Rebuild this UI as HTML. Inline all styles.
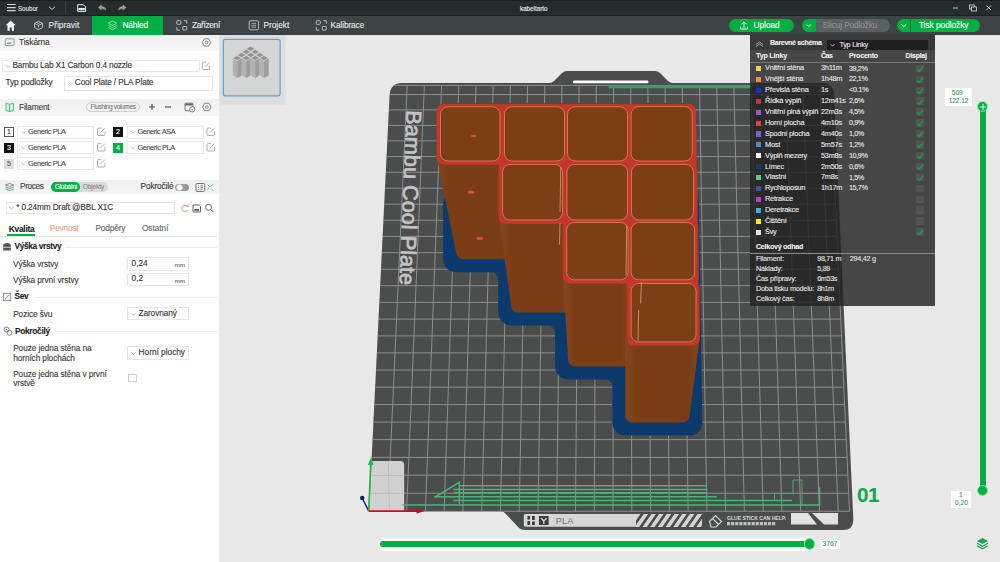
<!DOCTYPE html>
<html><head><meta charset="utf-8">
<style>
*{margin:0;padding:0;box-sizing:border-box}
html,body{width:1000px;height:562px;overflow:hidden;background:#e8e8e8;font-family:"Liberation Sans",sans-serif;position:relative}
.a{position:absolute}
#title{left:0;top:0;width:1000px;height:16px;background:#262c2d;border-top:1px solid #1a1e1f;border-bottom:1px solid #1b2021}
#tabs{left:0;top:16px;width:1000px;height:19px;background:#3d4445;border-bottom:1px solid #353b3c}
#left{left:0;top:35px;width:219px;height:527px;background:#fff}
svg{position:absolute;left:0;top:0}
.t{position:absolute;white-space:nowrap;line-height:1;-webkit-text-stroke:0.12px currentColor}
</style></head><body>
<svg width="1000" height="562" viewBox="0 0 1000 562">
 <defs><clipPath id="pc"><path d="M389.6 95 Q390.4 83 402 83 L822 83 Q833.5 83 834 95 L853.3 519 L853 511.3 L369 511.3 Z"/></clipPath></defs>
 <path d="M389.6 95 Q390.4 83 402 83 L549 83 Q552 83 554 81 L562 73 Q564 71 567 71 L655 71 Q658 71 660 73 L668 81 Q670 83 673 83 L822 83 Q833.5 83 834 95 L853.3 519 Q853.8 530 843 530 L525 530 Q521 530 519 528 L505 513 Q503 511 500 511 L369 511.3 Z" fill="#4b4c4c"/>
 <path clip-path="url(#pc)" d="M387.8 511.3L407.2 85.4M406.6 511.3L424.4 85.4M425.4 511.3L441.6 85.4M444.1 511.3L458.8 85.4M462.9 511.3L476.0 85.4M481.7 511.3L493.2 85.4M500.4 511.3L510.4 85.4M519.2 511.3L527.6 85.4M538.0 511.3L544.8 85.4M556.7 511.3L561.9 85.4M575.5 511.3L579.1 85.4M594.3 511.3L596.3 85.4M613.0 511.3L613.5 85.4M631.8 511.3L630.7 85.4M650.6 511.3L647.9 85.4M669.3 511.3L665.1 85.4M688.1 511.3L682.3 85.4M706.9 511.3L699.5 85.4M725.6 511.3L716.7 85.4M744.4 511.3L733.8 85.4M763.2 511.3L751.0 85.4M781.9 511.3L768.2 85.4M800.7 511.3L785.4 85.4M819.5 511.3L802.6 85.4M838.2 511.3L819.8 85.4M370.0 493.2L848.7 493.2M370.8 475.2L847.9 475.2M371.7 457.4L847.0 457.4M372.6 439.6L846.2 439.6M373.5 422.1L845.4 422.1M374.3 404.6L844.6 404.6M375.2 387.2L843.8 387.2M376.0 370.0L843.1 370.0M376.9 352.9L842.3 352.9M377.7 335.9L841.5 335.9M378.5 319.1L840.7 319.1M379.4 302.3L840.0 302.3M380.2 285.7L839.2 285.7M381.0 269.2L838.5 269.2M381.8 252.7L837.7 252.7M382.6 236.4L837.0 236.4M383.4 220.3L836.2 220.3M384.2 204.2L835.5 204.2M385.0 188.2L834.8 188.2M385.8 172.3L834.1 172.3M386.5 156.6L833.3 156.6M387.3 140.9L832.6 140.9M388.1 125.4L831.9 125.4M388.8 109.9L831.2 109.9M389.6 94.6L830.5 94.6M390.1 85.4L830.1 85.4M849.5 511.3L830.1 85.4" stroke="#8d8e8e" stroke-width="1" fill="none"/>
 <rect x="573" y="80.5" width="75.5" height="2.7" rx="1.3" fill="#fff"/>


 <!-- bottom label -->
 <path d="M525.5 514L636 514L636 526.8L525.5 526.8Q523.8 526.8 523.8 525L523.8 515.8Q523.8 514 525.5 514Z" fill="#d6d6d6"/>
 <defs><clipPath id="sc"><rect x="636" y="514" width="66" height="13"/></clipPath></defs>
 <path clip-path="url(#sc)" d="M627.0 527L631.5 527L640.5 514L636.0 514ZM634.7 527L639.2 527L648.2 514L643.7 514ZM642.4 527L646.9 527L655.9 514L651.4 514ZM650.1 527L654.6 527L663.6 514L659.1 514ZM657.8 527L662.3 527L671.3 514L666.8 514ZM665.5 527L670.0 527L679.0 514L674.5 514ZM673.2 527L677.7 527L686.7 514L682.2 514ZM680.9 527L685.4 527L694.4 514L689.9 514ZM688.6 527L693.1 527L702.1 514L697.6 514ZM696.3 527L700.8 527L709.8 514L705.3 514ZM704.0 527L708.5 527L717.5 514L713.0 514Z" fill="#d4d4d4"/>
 <path d="M527.4 516h2.6v3.6h-2.6zM527.4 521h2.6v4h-2.6zM532 516h2.8v4h-2.8zM532 521.5h2.8v3.5h-2.8z" fill="#3a3a3a"/>
 <rect x="539" y="516" width="9.6" height="9" fill="#3a3a3a"/>
 <path d="M541 518L543.8 521L546.5 518.2M543.8 521L543.8 524" stroke="#d6d6d6" stroke-width="1.4" fill="none"/>
 <text x="555.8" y="524" font-family="Liberation Sans" font-size="9.2" fill="#707070" textLength="17.6" lengthAdjust="spacingAndGlyphs">PLA</text>
 <path d="M709.5 521.5L715.5 515.5L721.5 521.5L716 527L711 527Z" fill="none" stroke="#d8d8d8" stroke-width="1.1"/>
 <path d="M712.5 518.5L718.5 524.5" stroke="#d8d8d8" stroke-width="1.1"/>
 <text x="727" y="520" font-family="Liberation Sans" font-weight="700" font-size="4.8" fill="#dcdcdc" textLength="59" lengthAdjust="spacingAndGlyphs">GLUE STICK CAN HELP.</text>
 <path d="M727 523.6H776" stroke="#cfcfcf" stroke-width="3.2" stroke-dasharray="3.2 0.9" opacity="0.85"/>
 <path d="M791 513L808 513L817 524.4L791 524.4Z" fill="#e2e2e2"/>
 <path d="M812 513L838 513L838 524.4L824 524.4Z" fill="#e2e2e2"/>
 <path d="M369 511.3L849.5 511.3" stroke="#8d8e8e" stroke-width="1"/>
 <!-- excluded area -->
 <path d="M371.5 461 L400.2 461 Q404.2 461 404.2 465 L404.2 511 L369.2 511 Z" fill="#d1d1d1"/>
 <path d="M372.2 475.6L404.2 475.6M371.2 493.4L404.2 493.4M388.3 461L389.4 511" stroke="#bdbdbd" stroke-width="1"/>
 <!-- Bambu Cool Plate -->
 <text transform="translate(406.5,110) rotate(92.3)" font-family="Liberation Sans" font-size="21.5" fill="#c4c4c4" stroke="#c4c4c4" stroke-width="0.7" textLength="175" lengthAdjust="spacingAndGlyphs">Bambu Cool Plate</text>
 <!-- green extrusions -->
 <g stroke="#4db374" stroke-width="1.5" fill="none" stroke-linecap="round">
  <path d="M608.5 86.8L750 86.8" stroke-width="3" stroke="#3f9c68" stroke-linecap="butt"/>
  <path d="M435.1 497L459.3 482.3L459.3 504.2"/>
  <path d="M459.3 485.8L706.8 485.8M454 489.6L706.8 489.6M454.5 492.8L706.8 492.8M435.1 496.8L716 496.8M454 500.6L791.5 500.6M403 505L819.5 505L819.5 488"/>
 </g>
 <g stroke="#4aa870" stroke-width="1" fill="none">
  <path d="M774.5 500.5L774.5 493.5L793 493.5L793 480L802 480L802 505M802 493.5L819.5 493.5"/>
 </g>
 <!-- axes -->
 <path d="M368.7 511L362.2 498" stroke="#0b1a6b" stroke-width="1.4"/>
 <circle cx="362.2" cy="498" r="2.2" fill="#0b1a6b"/>
 <path d="M368.7 511L370.8 463" stroke="#1db83a" stroke-width="1.6"/>
 <path d="M367.9 465L371 457.3L373.6 465Z" fill="#1db83a"/>
 <path d="M368.7 511.2L418 511.2" stroke="#c0141a" stroke-width="1.8"/>
 <path d="M416.5 508.6L424.4 511.2L416.5 513.6Z" fill="#c0141a"/>
 <!-- brim -->
 <path d="M456.2 204.5L685.9 204.5L689.3 422.6L625.3 422.6L625.3 366.4L568.1 366.4L568.1 312.4L511.2 312.4L511.2 259.2L456.2 259.2Z" fill="#0c3a6c" stroke="#0c3a6c" stroke-width="26" stroke-linejoin="round"/><path d="M612.3 379.4L612.3 386.4A7 7 0 0 0 605.3 379.4ZM555.1 325.4L555.1 332.4A7 7 0 0 0 548.1 325.4ZM498.2 272.2L498.2 279.2A7 7 0 0 0 491.2 272.2Z" fill="#0c3a6c"/>
 <!-- walls -->
 <defs><linearGradient id="wg" x1="0" x2="1" y1="0" y2="0"><stop offset="0" stop-color="#86461b"/><stop offset="0.16" stop-color="#7a3d15"/><stop offset="0.84" stop-color="#7a3d15"/><stop offset="1" stop-color="#84441a"/></linearGradient></defs><path d="M436.7 111.3L437.0 109.2L437.8 107.3L439.0 105.6L440.7 104.4L442.6 103.6L444.7 103.3L495.8 103.3L497.9 103.6L499.8 104.4L501.5 105.6L502.7 107.3L503.5 109.2L503.8 111.3L515.7 210.6L515.7 252.2L515.5 254.0L514.8 255.7L513.6 257.1L512.2 258.2L510.5 258.9L508.7 259.2L463.2 259.2L461.4 258.9L459.7 258.2L458.2 257.1L457.1 255.7L456.4 254.0L437.0 158.9L436.7 156.8Z" fill="url(#wg)"/><path d="M500.7 111.3L501.0 109.2L501.8 107.3L503.0 105.6L504.7 104.4L506.6 103.6L508.7 103.3L560.3 103.3L562.4 103.6L564.3 104.4L566.0 105.6L567.2 107.3L568.0 109.2L568.3 111.3L572.9 210.6L572.9 252.2L572.7 254.0L572.0 255.7L570.8 257.1L569.4 258.2L567.7 258.9L565.9 259.2L519.9 259.2L518.1 258.9L516.4 258.2L515.0 257.1L513.9 255.7L513.2 254.0L512.9 252.2L500.7 156.8Z" fill="url(#wg)"/><path d="M563.7 111.3L564.0 109.2L564.8 107.3L566.0 105.6L567.7 104.4L569.6 103.6L571.7 103.3L623.3 103.3L625.4 103.6L627.3 104.4L629.0 105.6L630.2 107.3L631.0 109.2L631.3 111.3L631.3 156.8L628.8 252.2L628.5 254.0L627.8 255.7L626.7 257.1L625.3 258.2L623.6 258.9L621.8 259.2L575.8 259.2L574.0 258.9L572.3 258.2L570.9 257.1L569.8 255.7L569.0 254.0L568.8 252.2L563.7 156.8Z" fill="url(#wg)"/><path d="M625.2 210.5L627.3 111.1L627.6 109.0L628.4 107.1L629.6 105.4L631.3 104.2L633.2 103.4L635.3 103.1L688.0 103.1L690.1 103.4L692.0 104.2L693.7 105.4L694.9 107.1L695.7 109.0L696.0 111.1L696.0 156.8L686.1 252.2L685.9 254.0L685.2 255.7L684.1 257.1L682.6 258.2L681.0 258.9L679.1 259.2L632.2 259.2L630.4 258.9L628.7 258.2L627.3 257.1L626.2 255.7L625.5 254.0L625.2 252.2Z" fill="url(#wg)"/><path d="M498.7 168.9L499.0 166.8L499.8 164.9L501.0 163.2L502.7 162.0L504.6 161.2L506.7 160.9L558.3 160.9L560.4 161.2L562.3 162.0L564.0 163.2L565.2 164.9L566.0 166.8L566.3 168.9L571.1 262.6L571.1 305.4L570.9 307.2L570.2 308.9L569.1 310.4L567.6 311.5L565.9 312.2L564.1 312.4L518.2 312.4L516.4 312.2L514.7 311.5L513.2 310.4L512.1 308.9L511.4 307.2L499.0 217.9L498.7 215.8Z" fill="url(#wg)"/><path d="M563.2 168.9L563.5 166.8L564.3 164.9L565.5 163.2L567.2 162.0L569.1 161.2L571.2 160.9L623.3 160.9L625.4 161.2L627.3 162.0L629.0 163.2L630.2 164.9L631.0 166.8L631.3 168.9L631.3 215.8L628.8 305.4L628.5 307.2L627.8 308.9L626.7 310.4L625.3 311.5L623.6 312.2L621.8 312.4L575.4 312.4L573.6 312.2L571.9 311.5L570.4 310.4L569.3 308.9L568.6 307.2L568.4 305.4L563.2 215.8Z" fill="url(#wg)"/><path d="M625.6 262.6L627.7 168.9L628.0 166.8L628.8 164.9L630.0 163.2L631.7 162.0L633.6 161.2L635.7 160.9L689.3 160.9L691.4 161.2L693.3 162.0L695.0 163.2L696.2 164.9L697.0 166.8L697.3 168.9L697.3 215.8L687.3 305.4L687.1 307.2L686.4 308.9L685.2 310.4L683.8 311.5L682.1 312.2L680.3 312.4L632.6 312.4L630.8 312.2L629.1 311.5L627.6 310.4L626.5 308.9L625.8 307.2L625.6 305.4Z" fill="url(#wg)"/><path d="M562.9 227.0L563.2 224.9L564.0 223.0L565.2 221.3L566.9 220.1L568.8 219.3L570.9 219.0L623.8 219.0L625.9 219.3L627.8 220.1L629.5 221.3L630.7 223.0L631.5 224.9L631.8 227.0L631.8 275.6L629.2 359.4L629.0 361.2L628.3 362.9L627.2 364.4L625.7 365.5L624.0 366.2L622.2 366.4L575.1 366.4L573.3 366.2L571.6 365.5L570.2 364.4L569.0 362.9L568.3 361.2L568.1 359.4L562.9 275.6Z" fill="url(#wg)"/><path d="M625.3 315.1L627.4 227.0L627.7 224.9L628.5 223.0L629.7 221.3L631.4 220.1L633.3 219.3L635.4 219.0L690.5 219.0L692.6 219.3L694.5 220.1L696.2 221.3L697.4 223.0L698.2 224.9L698.5 227.0L698.5 275.6L688.4 359.4L688.1 361.2L687.4 362.9L686.3 364.4L684.9 365.5L683.2 366.2L681.4 366.4L632.3 366.4L630.5 366.2L628.8 365.5L627.4 364.4L626.2 362.9L625.5 361.2L625.3 359.4Z" fill="url(#wg)"/><path d="M625.3 370.2L627.4 288.0L627.7 285.9L628.5 284.0L629.7 282.3L631.4 281.1L633.3 280.3L635.4 280.0L691.8 280.0L693.9 280.3L695.8 281.1L697.5 282.3L698.7 284.0L699.5 285.9L699.8 288.0L699.8 337.8L699.5 339.9L689.5 415.6L689.3 417.4L688.6 419.1L687.5 420.5L686.0 421.6L684.3 422.3L682.5 422.6L632.3 422.6L630.5 422.3L628.8 421.6L627.4 420.5L626.2 419.1L625.5 417.4L625.3 415.6Z" fill="url(#wg)"/>
 <!-- top outline -->
 <path d="M444.2 104.2 L688.2 104.2 Q695.7 104.2 695.9 111.7 L699.5 338.3 Q699.5 345.8 692 345.8 L634.9 345.8 Q627.4 345.8 627.4 338.3 L627.4 283.6 L570.4 283.6 Q562.9 283.6 562.9 276.1 L562.9 223.8 L506.2 223.8 Q498.7 223.8 498.7 216.3 L498.7 164.8 L444.2 164.8 Q436.7 164.8 436.7 157.3 L436.7 111.7 Q436.7 104.2 444.2 104.2 Z" fill="#c3372a"/>
 <g fill="#7b3e15" stroke="#e7835a" stroke-width="0.8"><rect x="440.5" y="106.8" width="59.5" height="54.2" rx="7.5"/><rect x="504.5" y="106.8" width="60.0" height="54.2" rx="7.5"/><rect x="567.5" y="106.8" width="60.0" height="54.2" rx="7.5"/><rect x="631.1" y="106.6" width="61.1" height="54.4" rx="7.5"/><rect x="502.5" y="164.4" width="60.0" height="55.6" rx="7.5"/><rect x="567" y="164.4" width="60.5" height="55.6" rx="7.5"/><rect x="631.5" y="164.4" width="62.0" height="55.6" rx="7.5"/><rect x="566.7" y="222.5" width="61.3" height="57.3" rx="7.5"/><rect x="631.2" y="222.5" width="63.5" height="57.3" rx="7.5"/><rect x="631.2" y="283.5" width="64.8" height="58.5" rx="7.5"/></g>


 <g stroke="#efc8a8" stroke-width="0.7" opacity="0.85"><path d="M560.8 167L560 212M560 223L559.5 244.7M626.7 226L626 275.4M641.4 282L640.6 303.4M638.7 310L638 340.8"/></g>
 <g fill="#d8503a"><ellipse cx="473.6" cy="136" rx="2.6" ry="1.2"/><ellipse cx="471" cy="192.2" rx="3.2" ry="1.6"/><ellipse cx="479.7" cy="238.4" rx="3.2" ry="1.6"/></g>
</svg>
<div class="a" style="left:750px;top:35px;width:185px;height:271px;background:rgba(34,34,34,0.82)"></div>
<div class="a" style="left:750px;top:35px;width:185px;height:15px;background:rgba(20,20,20,0.25)"></div>
<div class="t" style="left:770px;top:40.22px;font-size:7.1px;color:#f0f0f0;font-weight:700;letter-spacing:-0.346px;">Barevné schéma</div>
<div class="a" style="left:827px;top:40px;width:101px;height:9.5px;background:#1e1e1e"></div>
<div class="t" style="left:839.4px;top:40.91px;font-size:7.3px;color:#e6e6e6;font-weight:400;letter-spacing:-0.249px;">Typ Linky</div>
<div class="t" style="left:756px;top:52.82px;font-size:7.1px;color:#eeeeee;font-weight:700;letter-spacing:-0.179px;">Typ Linky</div>
<div class="t" style="left:821px;top:52.82px;font-size:7.1px;color:#eeeeee;font-weight:700;letter-spacing:-0.544px;">Čas</div>
<div class="t" style="left:849px;top:52.82px;font-size:7.1px;color:#eeeeee;font-weight:700;letter-spacing:-0.222px;">Procento</div>
<div class="t" style="left:905.6px;top:52.82px;font-size:7.1px;color:#eeeeee;font-weight:700;letter-spacing:-0.328px;">Displaj</div>
<div class="a" style="left:750px;top:62px;width:185px;height:0.8px;background:#777"></div>
<div class="a" style="left:756px;top:66.0px;width:5.2px;height:5.2px;background:#f2d544"></div>
<div class="t" style="left:765px;top:64.46px;font-size:7.4px;color:#e8e8e8;font-weight:400;letter-spacing:-0.194px;">Vnitřní stěna</div>
<div class="t" style="left:821px;top:64.46px;font-size:7.4px;color:#e8e8e8;font-weight:400;letter-spacing:-0.269px;">3h11m</div>
<div class="t" style="left:849px;top:64.57px;font-size:7.2px;color:#e8e8e8;font-weight:400;letter-spacing:-0.397px;">39,2%</div>
<div class="a" style="left:916px;top:64.69999999999999px;width:8px;height:7.6px;background:rgba(95,95,95,0.55)"></div>
<svg class="a" style="left:916px;top:64.8px" width="8" height="8" viewBox="0 0 8 8"><path d="M1.3 4.3L3.3 6.3L7.2 1.8" stroke="#1f9350" stroke-width="1.7" fill="none"/></svg>
<div class="a" style="left:756px;top:76.9px;width:5.2px;height:5.2px;background:#f09044"></div>
<div class="t" style="left:765px;top:75.36px;font-size:7.4px;color:#e8e8e8;font-weight:400;letter-spacing:-0.206px;">Vnější stěna</div>
<div class="t" style="left:821px;top:75.36px;font-size:7.4px;color:#e8e8e8;font-weight:400;letter-spacing:-0.275px;">1h48m</div>
<div class="t" style="left:849px;top:75.47px;font-size:7.2px;color:#e8e8e8;font-weight:400;letter-spacing:-0.397px;">22,1%</div>
<div class="a" style="left:916px;top:75.6px;width:8px;height:7.6px;background:rgba(95,95,95,0.55)"></div>
<svg class="a" style="left:916px;top:75.7px" width="8" height="8" viewBox="0 0 8 8"><path d="M1.3 4.3L3.3 6.3L7.2 1.8" stroke="#1f9350" stroke-width="1.7" fill="none"/></svg>
<div class="a" style="left:756px;top:87.8px;width:5.2px;height:5.2px;background:#1f2ae0"></div>
<div class="t" style="left:765px;top:86.26px;font-size:7.4px;color:#e8e8e8;font-weight:400;letter-spacing:-0.202px;">Převislá stěna</div>
<div class="t" style="left:821px;top:86.26px;font-size:7.4px;color:#e8e8e8;font-weight:400;letter-spacing:-0.238px;">1s</div>
<div class="t" style="left:849px;top:86.37px;font-size:7.2px;color:#e8e8e8;font-weight:400;letter-spacing:-0.251px;">&lt;0.1%</div>
<div class="a" style="left:916px;top:86.49999999999999px;width:8px;height:7.6px;background:rgba(95,95,95,0.55)"></div>
<svg class="a" style="left:916px;top:86.6px" width="8" height="8" viewBox="0 0 8 8"><path d="M1.3 4.3L3.3 6.3L7.2 1.8" stroke="#1f9350" stroke-width="1.7" fill="none"/></svg>
<div class="a" style="left:756px;top:98.7px;width:5.2px;height:5.2px;background:#b83a32"></div>
<div class="t" style="left:765px;top:97.16px;font-size:7.4px;color:#e8e8e8;font-weight:400;letter-spacing:-0.214px;">Řídká výplň</div>
<div class="t" style="left:821px;top:97.16px;font-size:7.4px;color:#e8e8e8;font-weight:400;letter-spacing:-0.267px;">12m41s</div>
<div class="t" style="left:849px;top:97.27px;font-size:7.2px;color:#e8e8e8;font-weight:400;letter-spacing:-0.399px;">2,6%</div>
<div class="a" style="left:916px;top:97.39999999999999px;width:8px;height:7.6px;background:rgba(95,95,95,0.55)"></div>
<svg class="a" style="left:916px;top:97.5px" width="8" height="8" viewBox="0 0 8 8"><path d="M1.3 4.3L3.3 6.3L7.2 1.8" stroke="#1f9350" stroke-width="1.7" fill="none"/></svg>
<div class="a" style="left:756px;top:109.6px;width:5.2px;height:5.2px;background:#9b59d0"></div>
<div class="t" style="left:765px;top:108.06px;font-size:7.4px;color:#e8e8e8;font-weight:400;letter-spacing:-0.192px;">Vnitřní plná výplň</div>
<div class="t" style="left:821px;top:108.06px;font-size:7.4px;color:#e8e8e8;font-weight:400;letter-spacing:-0.270px;">22m3s</div>
<div class="t" style="left:849px;top:108.17px;font-size:7.2px;color:#e8e8e8;font-weight:400;letter-spacing:-0.399px;">4,5%</div>
<div class="a" style="left:916px;top:108.29999999999998px;width:8px;height:7.6px;background:rgba(95,95,95,0.55)"></div>
<svg class="a" style="left:916px;top:108.4px" width="8" height="8" viewBox="0 0 8 8"><path d="M1.3 4.3L3.3 6.3L7.2 1.8" stroke="#1f9350" stroke-width="1.7" fill="none"/></svg>
<div class="a" style="left:756px;top:120.5px;width:5.2px;height:5.2px;background:#e0404a"></div>
<div class="t" style="left:765px;top:118.96px;font-size:7.4px;color:#e8e8e8;font-weight:400;letter-spacing:-0.213px;">Horní plocha</div>
<div class="t" style="left:821px;top:118.96px;font-size:7.4px;color:#e8e8e8;font-weight:400;letter-spacing:-0.270px;">4m10s</div>
<div class="t" style="left:849px;top:119.07px;font-size:7.2px;color:#e8e8e8;font-weight:400;letter-spacing:-0.399px;">0,9%</div>
<div class="a" style="left:916px;top:119.19999999999999px;width:8px;height:7.6px;background:rgba(95,95,95,0.55)"></div>
<svg class="a" style="left:916px;top:119.3px" width="8" height="8" viewBox="0 0 8 8"><path d="M1.3 4.3L3.3 6.3L7.2 1.8" stroke="#1f9350" stroke-width="1.7" fill="none"/></svg>
<div class="a" style="left:756px;top:131.4px;width:5.2px;height:5.2px;background:#7a5fd0"></div>
<div class="t" style="left:765px;top:129.86px;font-size:7.4px;color:#e8e8e8;font-weight:400;letter-spacing:-0.221px;">Spodní plocha</div>
<div class="t" style="left:821px;top:129.86px;font-size:7.4px;color:#e8e8e8;font-weight:400;letter-spacing:-0.270px;">4m40s</div>
<div class="t" style="left:849px;top:129.97px;font-size:7.2px;color:#e8e8e8;font-weight:400;letter-spacing:-0.399px;">1,0%</div>
<div class="a" style="left:916px;top:130.1px;width:8px;height:7.6px;background:rgba(95,95,95,0.55)"></div>
<svg class="a" style="left:916px;top:130.2px" width="8" height="8" viewBox="0 0 8 8"><path d="M1.3 4.3L3.3 6.3L7.2 1.8" stroke="#1f9350" stroke-width="1.7" fill="none"/></svg>
<div class="a" style="left:756px;top:142.29999999999998px;width:5.2px;height:5.2px;background:#5587c0"></div>
<div class="t" style="left:765px;top:140.76px;font-size:7.4px;color:#e8e8e8;font-weight:400;letter-spacing:-0.244px;">Most</div>
<div class="t" style="left:821px;top:140.76px;font-size:7.4px;color:#e8e8e8;font-weight:400;letter-spacing:-0.270px;">5m57s</div>
<div class="t" style="left:849px;top:140.87px;font-size:7.2px;color:#e8e8e8;font-weight:400;letter-spacing:-0.399px;">1,2%</div>
<div class="a" style="left:916px;top:140.99999999999997px;width:8px;height:7.6px;background:rgba(95,95,95,0.55)"></div>
<svg class="a" style="left:916px;top:141.1px" width="8" height="8" viewBox="0 0 8 8"><path d="M1.3 4.3L3.3 6.3L7.2 1.8" stroke="#1f9350" stroke-width="1.7" fill="none"/></svg>
<div class="a" style="left:756px;top:153.20000000000002px;width:5.2px;height:5.2px;background:#ffffff"></div>
<div class="t" style="left:765px;top:151.66px;font-size:7.4px;color:#e8e8e8;font-weight:400;letter-spacing:-0.227px;">Výplň mezery</div>
<div class="t" style="left:821px;top:151.66px;font-size:7.4px;color:#e8e8e8;font-weight:400;letter-spacing:-0.270px;">53m8s</div>
<div class="t" style="left:849px;top:151.77px;font-size:7.2px;color:#e8e8e8;font-weight:400;letter-spacing:-0.397px;">10,9%</div>
<div class="a" style="left:916px;top:151.9px;width:8px;height:7.6px;background:rgba(95,95,95,0.55)"></div>
<svg class="a" style="left:916px;top:152.0px" width="8" height="8" viewBox="0 0 8 8"><path d="M1.3 4.3L3.3 6.3L7.2 1.8" stroke="#1f9350" stroke-width="1.7" fill="none"/></svg>
<div class="a" style="left:756px;top:164.1px;width:5.2px;height:5.2px;background:#0f3f73"></div>
<div class="t" style="left:765px;top:162.56px;font-size:7.4px;color:#e8e8e8;font-weight:400;letter-spacing:-0.245px;">Límec</div>
<div class="t" style="left:821px;top:162.56px;font-size:7.4px;color:#e8e8e8;font-weight:400;letter-spacing:-0.270px;">2m50s</div>
<div class="t" style="left:849px;top:162.67px;font-size:7.2px;color:#e8e8e8;font-weight:400;letter-spacing:-0.399px;">0,6%</div>
<div class="a" style="left:916px;top:162.79999999999998px;width:8px;height:7.6px;background:rgba(95,95,95,0.55)"></div>
<svg class="a" style="left:916px;top:162.9px" width="8" height="8" viewBox="0 0 8 8"><path d="M1.3 4.3L3.3 6.3L7.2 1.8" stroke="#1f9350" stroke-width="1.7" fill="none"/></svg>
<div class="a" style="left:756px;top:175.0px;width:5.2px;height:5.2px;background:#5fc79a"></div>
<div class="t" style="left:765px;top:173.46px;font-size:7.4px;color:#e8e8e8;font-weight:400;letter-spacing:-0.197px;">Vlastní</div>
<div class="t" style="left:821px;top:173.46px;font-size:7.4px;color:#e8e8e8;font-weight:400;letter-spacing:-0.275px;">7m8s</div>
<div class="t" style="left:849px;top:173.57px;font-size:7.2px;color:#e8e8e8;font-weight:400;letter-spacing:-0.399px;">1,5%</div>
<div class="a" style="left:916px;top:173.7px;width:8px;height:7.6px;background:rgba(95,95,95,0.55)"></div>
<svg class="a" style="left:916px;top:173.8px" width="8" height="8" viewBox="0 0 8 8"><path d="M1.3 4.3L3.3 6.3L7.2 1.8" stroke="#1f9350" stroke-width="1.7" fill="none"/></svg>
<div class="a" style="left:756px;top:185.9px;width:5.2px;height:5.2px;background:#4453a8"></div>
<div class="t" style="left:765px;top:184.36px;font-size:7.4px;color:#e8e8e8;font-weight:400;letter-spacing:-0.237px;">Rychloposun</div>
<div class="t" style="left:821px;top:184.36px;font-size:7.4px;color:#e8e8e8;font-weight:400;letter-spacing:-0.275px;">1h17m</div>
<div class="t" style="left:849px;top:184.47px;font-size:7.2px;color:#e8e8e8;font-weight:400;letter-spacing:-0.397px;">15,7%</div>
<div class="a" style="left:916px;top:184.6px;width:8px;height:7.6px;background:rgba(95,95,95,0.55)"></div>
<div class="a" style="left:756px;top:196.8px;width:5.2px;height:5.2px;background:#c23ac8"></div>
<div class="t" style="left:765px;top:195.26px;font-size:7.4px;color:#e8e8e8;font-weight:400;letter-spacing:-0.225px;">Retrakce</div>
<div class="a" style="left:916px;top:195.5px;width:8px;height:7.6px;background:rgba(95,95,95,0.55)"></div>
<div class="a" style="left:756px;top:207.70000000000002px;width:5.2px;height:5.2px;background:#43aed6"></div>
<div class="t" style="left:765px;top:206.16px;font-size:7.4px;color:#e8e8e8;font-weight:400;letter-spacing:-0.220px;">Deretrakce</div>
<div class="a" style="left:916px;top:206.4px;width:8px;height:7.6px;background:rgba(95,95,95,0.55)"></div>
<div class="a" style="left:756px;top:218.6px;width:5.2px;height:5.2px;background:#f3ef1f"></div>
<div class="t" style="left:765px;top:217.06px;font-size:7.4px;color:#e8e8e8;font-weight:400;letter-spacing:-0.200px;">Čištění</div>
<div class="a" style="left:916px;top:217.29999999999998px;width:8px;height:7.6px;background:rgba(95,95,95,0.55)"></div>
<div class="a" style="left:756px;top:229.5px;width:5.2px;height:5.2px;background:#e6e6e6"></div>
<div class="t" style="left:765px;top:227.96px;font-size:7.4px;color:#e8e8e8;font-weight:400;letter-spacing:-0.250px;">Švy</div>
<div class="a" style="left:916px;top:228.2px;width:8px;height:7.6px;background:rgba(95,95,95,0.55)"></div>
<svg class="a" style="left:916px;top:228.3px" width="8" height="8" viewBox="0 0 8 8"><path d="M1.3 4.3L3.3 6.3L7.2 1.8" stroke="#1f9350" stroke-width="1.7" fill="none"/></svg>
<div class="t" style="left:756px;top:244.02px;font-size:7.1px;color:#f2f2f2;font-weight:700;letter-spacing:-0.268px;">Celkový odhad</div>
<div class="a" style="left:750px;top:253px;width:185px;height:0.8px;background:#8a8a8a"></div>
<div class="t" style="left:756px;top:255.21px;font-size:7.3px;color:#e2e2e2;font-weight:400;letter-spacing:-0.228px;">Filament:</div>
<div class="t" style="left:817.2px;top:255.27px;font-size:7.2px;color:#e2e2e2;font-weight:400;letter-spacing:-0.289px;">98,71 m</div>
<div class="t" style="left:849.7px;top:255.27px;font-size:7.2px;color:#e2e2e2;font-weight:400;letter-spacing:-0.253px;">294,42 g</div>
<div class="t" style="left:756px;top:265.41px;font-size:7.3px;color:#e2e2e2;font-weight:400;letter-spacing:-0.243px;">Náklady:</div>
<div class="t" style="left:817.2px;top:265.47px;font-size:7.2px;color:#e2e2e2;font-weight:400;letter-spacing:-0.272px;">5,89</div>
<div class="t" style="left:756px;top:275.41px;font-size:7.3px;color:#e2e2e2;font-weight:400;letter-spacing:-0.229px;">Čas přípravy:</div>
<div class="t" style="left:817.2px;top:275.47px;font-size:7.2px;color:#e2e2e2;font-weight:400;letter-spacing:-0.336px;">6m53s</div>
<div class="t" style="left:756px;top:285.21px;font-size:7.3px;color:#e2e2e2;font-weight:400;letter-spacing:-0.238px;">Doba tisku modelu:</div>
<div class="t" style="left:817.2px;top:285.27px;font-size:7.2px;color:#e2e2e2;font-weight:400;letter-spacing:-0.350px;">8h1m</div>
<div class="t" style="left:756px;top:295.11px;font-size:7.3px;color:#e2e2e2;font-weight:400;letter-spacing:-0.236px;">Celkový čas:</div>
<div class="t" style="left:817.2px;top:295.17px;font-size:7.2px;color:#e2e2e2;font-weight:400;letter-spacing:-0.350px;">8h8m</div>

<div class="a" style="left:978.5px;top:106px;width:8px;height:384px;background:#fff;border-radius:4px"></div>
<div class="a" style="left:979.5px;top:106px;width:6px;height:384px;background:#00ae42"></div>
<div class="a" style="left:976.5px;top:100.5px;width:11.5px;height:11.5px;background:#00ae42;border-radius:50%;border:1px solid #7df0a6"></div>
<svg class="a" style="left:976.5px;top:100.5px" width="12" height="12" viewBox="0 0 12 12"><path d="M6 2.8V9.2M2.8 6H9.2" stroke="#fff" stroke-width="0.9"/></svg>
<div class="a" style="left:976.5px;top:484.5px;width:11.5px;height:11.5px;background:#00ae42;border-radius:50%;border:1px solid #7df0a6"></div>
<div class="a" style="left:945px;top:88px;width:26.5px;height:18px;background:#fff"></div>
<div class="t" style="left:951.8px;top:90.20px;font-size:6.59px;color:#3a9a6a;font-weight:400;">509</div>
<div class="t" style="left:948.7px;top:98.39px;font-size:6.41px;color:#3a9a6a;font-weight:400;">122.12</div>
<div class="a" style="left:951px;top:490.5px;width:20px;height:17px;background:#fff"></div>
<div class="t" style="left:959px;top:491.94px;font-size:6.5px;color:#3a9a6a;font-weight:400;">1</div>
<div class="t" style="left:955px;top:499.90px;font-size:6.6px;color:#3a9a6a;font-weight:400;">0,20</div>
<div class="a" style="left:378px;top:538px;width:435px;height:13px;background:#fff;border-radius:6.5px"></div>
<div class="a" style="left:380px;top:541px;width:430px;height:6px;background:#00ae42;border-radius:3px"></div>
<div class="a" style="left:803.8px;top:538.3px;width:11.5px;height:11.5px;background:#00ae42;border-radius:50%;border:1px solid #7df0a6"></div>
<div class="a" style="left:820px;top:539.8px;width:20px;height:9.2px;background:#fff"></div>
<div class="t" style="left:822.4px;top:541.13px;font-size:6.74px;color:#3a9a6a;font-weight:400;">3767</div>
<div class="t" style="left:857px;top:485.27px;font-size:20.7px;color:#10a84a;font-weight:700;letter-spacing:-0.5px">01</div>

<div id="title" class="a"></div>
<div id="tabs" class="a"></div>
<div class="t" style="left:17.6px;top:5.22px;font-size:7.2px;color:#e6e6e6;font-weight:400;transform:scaleX(0.86);transform-origin:0 0">Soubor</div>
<div class="t" style="left:519.5px;top:5.22px;font-size:7.2px;color:#eeeeee;font-weight:400;transform:scaleX(0.87);transform-origin:0 0;-webkit-text-stroke:0.15px #eee">kabeltarto</div>
<div class="a" style="left:92px;top:16px;width:71px;height:19px;background:#00ae42"></div>
<div class="t" style="left:48.6px;top:20.85px;font-size:8.3px;color:#e8e8e8;font-weight:400;letter-spacing:0.020px;">Připravit</div>
<div class="t" style="left:122.5px;top:20.85px;font-size:8.3px;color:#ffffff;font-weight:400;letter-spacing:-0.132px;">Náhled</div>
<div class="t" style="left:191.9px;top:20.85px;font-size:8.3px;color:#e8e8e8;font-weight:400;letter-spacing:-0.298px;">Zařízení</div>
<div class="t" style="left:263.4px;top:20.85px;font-size:8.3px;color:#e8e8e8;font-weight:400;letter-spacing:0.022px;">Projekt</div>
<div class="t" style="left:330.5px;top:20.85px;font-size:8.3px;color:#e8e8e8;font-weight:400;letter-spacing:-0.102px;">Kalibrace</div>
<div class="a" style="left:728.5px;top:19px;width:65px;height:12.5px;background:#00ae42;border-radius:6.5px"></div>
<div class="t" style="left:753.6px;top:20.65px;font-size:8.3px;color:#fff;font-weight:400;letter-spacing:-0.053px;">Upload</div>
<div class="a" style="left:801.8px;top:19px;width:88px;height:12.5px;background:#5b6062;border-radius:6.5px"></div>
<div class="a" style="left:801.8px;top:19px;width:14px;height:12.5px;background:#00ae42;border-radius:6.5px 0 0 6.5px"></div>
<div class="t" style="left:822.8px;top:20.65px;font-size:8.3px;color:#8d9193;font-weight:400;letter-spacing:-0.113px;">Slicuj Podložku</div>
<div class="a" style="left:897px;top:19px;width:83px;height:12.5px;background:#00ae42;border-radius:6.5px"></div>
<div class="a" style="left:910px;top:19px;width:0.8px;height:12.5px;background:#1b6d3a"></div>
<div class="t" style="left:918.9px;top:20.65px;font-size:8.3px;color:#fff;font-weight:400;letter-spacing:-0.028px;">Tisk podložky</div>

<div id="left" class="a">
</div>
<div class="a" style="left:0px;top:35px;width:219px;height:16px;background:linear-gradient(#f0f0f0,#f7f7f7)"></div>
<div class="t" style="left:19px;top:37.85px;font-size:8.3px;color:#3c3c3c;font-weight:400;letter-spacing:-0.128px;">Tiskárna</div>
<div class="a" style="left:1.8px;top:59.7px;width:198.5px;height:12.3px;border:1px solid #e6e6e6;border-radius:1px;background:#fff"></div>
<div class="t" style="left:12.5px;top:61.35px;font-size:8.3px;color:#333;font-weight:400;letter-spacing:-0.170px;">Bambu Lab X1 Carbon 0.4 nozzle</div>
<div class="t" style="left:5.5px;top:78.15px;font-size:8.3px;color:#333;font-weight:400;letter-spacing:-0.122px;">Typ podložky</div>
<div class="a" style="left:64px;top:75.5px;width:149px;height:15px;border:1px solid #e6e6e6;background:#fff"></div>
<div class="t" style="left:74.8px;top:78.35px;font-size:8.3px;color:#333;font-weight:400;letter-spacing:-0.143px;">Cool Plate / PLA Plate</div>
<div class="a" style="left:0px;top:99px;width:219px;height:17px;background:linear-gradient(#f0f0f0,#f7f7f7)"></div>
<div class="t" style="left:19px;top:102.85px;font-size:8.3px;color:#3c3c3c;font-weight:400;letter-spacing:-0.168px;">Filament</div>
<div class="a" style="left:86px;top:102.3px;width:54px;height:9.5px;border:1px solid #cfcfcf;border-radius:5px;background:#f2f2f2"></div>
<div class="t" style="left:90.6px;top:103.76px;font-size:6.5px;color:#7a7a7a;font-weight:400;letter-spacing:-0.350px;">Flushing volumes</div>
<div class="a" style="left:4.4px;top:127px;width:10px;height:10px;background:#fff;border:1px solid #555;"></div>
<div class="t" style="left:7.1000000000000005px;top:128.17px;font-size:7.2px;color:#333;font-weight:400;letter-spacing:-0.556px;">1</div>
<div class="a" style="left:17.4px;top:125.5px;width:77px;height:13px;border:1px solid #e8e8e8;background:#fff"></div>
<div class="t" style="left:28.0px;top:128.21px;font-size:7.3px;color:#474747;font-weight:400;letter-spacing:-0.361px;">Generic PLA</div>
<div class="a" style="left:113.3px;top:127px;width:10px;height:10px;background:#111;"></div>
<div class="t" style="left:116.0px;top:128.17px;font-size:7.2px;color:#fff;font-weight:400;letter-spacing:-0.556px;">2</div>
<div class="a" style="left:126.8px;top:125.5px;width:77px;height:13px;border:1px solid #e8e8e8;background:#fff"></div>
<div class="t" style="left:137.4px;top:128.21px;font-size:7.3px;color:#474747;font-weight:400;letter-spacing:-0.364px;">Generic ASA</div>
<div class="a" style="left:4.4px;top:142.5px;width:10px;height:10px;background:#111;"></div>
<div class="t" style="left:7.1000000000000005px;top:143.67px;font-size:7.2px;color:#fff;font-weight:400;letter-spacing:-0.556px;">3</div>
<div class="a" style="left:17.4px;top:141.0px;width:77px;height:13px;border:1px solid #e8e8e8;background:#fff"></div>
<div class="t" style="left:28.0px;top:143.71px;font-size:7.3px;color:#474747;font-weight:400;letter-spacing:-0.361px;">Generic PLA</div>
<div class="a" style="left:113.3px;top:142.5px;width:10px;height:10px;background:#00ae42;"></div>
<div class="t" style="left:116.0px;top:143.67px;font-size:7.2px;color:#fff;font-weight:400;letter-spacing:-0.556px;">4</div>
<div class="a" style="left:126.8px;top:141.0px;width:77px;height:13px;border:1px solid #e8e8e8;background:#fff"></div>
<div class="t" style="left:137.4px;top:143.71px;font-size:7.3px;color:#474747;font-weight:400;letter-spacing:-0.361px;">Generic PLA</div>
<div class="a" style="left:4.4px;top:158.5px;width:10px;height:10px;background:#dddddd;"></div>
<div class="t" style="left:7.1000000000000005px;top:159.67px;font-size:7.2px;color:#555;font-weight:400;letter-spacing:-0.556px;">5</div>
<div class="a" style="left:17.4px;top:157.0px;width:77px;height:13px;border:1px solid #e8e8e8;background:#fff"></div>
<div class="t" style="left:28.0px;top:159.71px;font-size:7.3px;color:#474747;font-weight:400;letter-spacing:-0.361px;">Generic PLA</div>
<div class="a" style="left:0px;top:180px;width:219px;height:14.3px;background:linear-gradient(#f0f0f0,#f5f5f5)"></div>
<div class="t" style="left:20px;top:182.35px;font-size:8.3px;color:#3c3c3c;font-weight:400;letter-spacing:-0.373px;">Proces</div>
<div class="a" style="left:51px;top:181.8px;width:57px;height:10.6px;background:#dcdcdc;border-radius:5.3px"></div>
<div class="a" style="left:51px;top:181.8px;width:29.3px;height:10.6px;background:#00ae42;border-radius:5.3px"></div>
<div class="t" style="left:54.8px;top:183.55px;font-size:6.7px;color:#fff;font-weight:400;letter-spacing:-0.326px;">Globální</div>
<div class="t" style="left:82.8px;top:183.64px;font-size:6.9px;color:#8a8a8a;font-weight:400;letter-spacing:-0.315px;">Objekty</div>
<div class="t" style="left:140.5px;top:182.35px;font-size:8.3px;color:#333;font-weight:400;letter-spacing:-0.128px;">Pokročilé</div>
<div class="a" style="left:175.3px;top:183.7px;width:13.8px;height:7.5px;background:#9a9a9a;border-radius:3.8px"></div>
<div class="a" style="left:175.5px;top:183.9px;width:7.2px;height:7.2px;background:#fff;border-radius:50%;border:0.5px solid #ccc"></div>
<div class="a" style="left:5.6px;top:201.8px;width:169px;height:12.4px;border:1px solid #e6e6e6;background:#fff"></div>
<div class="t" style="left:16.2px;top:203.35px;font-size:8.3px;color:#333;font-weight:400;letter-spacing:-0.147px;">* 0.24mm Draft @BBL X1C</div>
<div class="t" style="left:8.7px;top:224.75px;font-size:8.4px;color:#222;font-weight:700;letter-spacing:-0.25px">Kvalita</div>
<div class="a" style="left:7px;top:234px;width:28px;height:1.6px;background:#00ae42"></div>
<div class="t" style="left:49.8px;top:224.05px;font-size:8.3px;color:#e8a282;font-weight:400;letter-spacing:-0.186px;">Pevnost</div>
<div class="t" style="left:95.4px;top:224.05px;font-size:8.3px;color:#666;font-weight:400;letter-spacing:-0.133px;">Podpěry</div>
<div class="t" style="left:141.9px;top:224.05px;font-size:8.3px;color:#666;font-weight:400;letter-spacing:-0.023px;">Ostatní</div>
<div class="a" style="left:0px;top:235.7px;width:217px;height:0.8px;background:#e4e4e4"></div>
<div class="t" style="left:14.5px;top:242.35px;font-size:8.3px;color:#222;font-weight:700;letter-spacing:-0.331px;">Výška vrstvy</div>
<div class="a" style="left:65px;top:246.5px;width:152px;height:0.6px;background:#ececec"></div>
<div class="t" style="left:13px;top:260.10px;font-size:8.3px;color:#383838;font-weight:400;letter-spacing:-0.1px">Výška vrstvy</div>
<div class="t" style="left:13px;top:275.60px;font-size:8.3px;color:#383838;font-weight:400;letter-spacing:-0.1px">Výška první vrstvy</div>
<div class="a" style="left:127.4px;top:257px;width:62px;height:13.6px;border:1px solid #e6e6e6;background:#fff"></div>
<div class="t" style="left:131.6px;top:258.95px;font-size:8.3px;color:#333;font-weight:400;letter-spacing:-0.039px;">0,24</div>
<div class="t" style="left:174.7px;top:262.07px;font-size:6.24px;color:#666;font-weight:400;">mm</div>
<div class="a" style="left:127.4px;top:272.5px;width:62px;height:13.1px;border:1px solid #e6e6e6;background:#fff"></div>
<div class="t" style="left:131.6px;top:274.35px;font-size:8.3px;color:#333;font-weight:400;letter-spacing:-0.037px;">0,2</div>
<div class="t" style="left:174.7px;top:277.57px;font-size:6.24px;color:#666;font-weight:400;">mm</div>
<div class="t" style="left:14.5px;top:292.35px;font-size:8.3px;color:#222;font-weight:700;letter-spacing:-0.386px;">Šev</div>
<div class="a" style="left:35px;top:297px;width:182px;height:0.6px;background:#ececec"></div>
<div class="t" style="left:13.2px;top:310.10px;font-size:8.3px;color:#383838;font-weight:400;letter-spacing:-0.1px">Pozice švu</div>
<div class="a" style="left:127.4px;top:307px;width:62px;height:13.4px;border:1px solid #e6e6e6;background:#fff"></div>
<div class="t" style="left:138.4px;top:308.95px;font-size:8.3px;color:#333;font-weight:400;letter-spacing:-0.079px;">Zarovnaný</div>
<div class="t" style="left:14.9px;top:326.55px;font-size:8.3px;color:#222;font-weight:700;letter-spacing:-0.265px;">Pokročilý</div>
<div class="a" style="left:55px;top:331px;width:162px;height:0.6px;background:#ececec"></div>
<div class="t" style="left:13.2px;top:344.20px;font-size:8.3px;color:#383838;font-weight:400;letter-spacing:-0.1px">Pouze jedna stěna na</div>
<div class="t" style="left:13.2px;top:353.50px;font-size:8.3px;color:#383838;font-weight:400;letter-spacing:-0.1px">horních plochách</div>
<div class="a" style="left:127.4px;top:346px;width:62px;height:14px;border:1px solid #e6e6e6;background:#fff"></div>
<div class="t" style="left:138.6px;top:348.15px;font-size:8.3px;color:#333;font-weight:400;letter-spacing:-0.014px;">Horní plochy</div>
<div class="t" style="left:13.2px;top:369.60px;font-size:8.3px;color:#383838;font-weight:400;letter-spacing:-0.1px">Pouze jedna stěna v první</div>
<div class="t" style="left:13.2px;top:378.90px;font-size:8.3px;color:#383838;font-weight:400;letter-spacing:-0.1px">vrstvě</div>
<div class="a" style="left:128px;top:373.5px;width:8.5px;height:8.5px;border:1px solid #cfcfcf;background:#fff"></div>

<svg class="a" style="left:0;top:0;pointer-events:none" width="1000" height="562" viewBox="0 0 1000 562"><path d="M7 4.5H15.7M7 7.6H15.7M7 10.6H15.7" stroke="#d4d4d4" stroke-width="1.1"/>
<path d="M49 6.8L52.0 9.4L55 6.8" stroke="#d0d0d0" stroke-width="1" fill="none"/>
<rect x="65" y="1.5" width="0.8" height="12.5" fill="#444a4c"/>
<path d="M77.6 4.7H83.4L85.6 6.9V11.4H77.6Z" stroke="#e8e8e8" stroke-width="1" fill="none"/><rect x="78.4" y="8" width="6.4" height="2.2" fill="#e8e8e8"/>
<path d="M98 7.5L101.5 4.5V6.3Q105.5 6.3 106.2 10.5Q104.5 8.6 101.5 8.7V10.5Z" fill="#9c9fa0"/>
<path d="M126.4 7.5L122.9 4.5V6.3Q118.9 6.3 118.2 10.5Q119.9 8.6 122.9 8.7V10.5Z" fill="#9c9fa0"/>
<path d="M953 8H958" stroke="#d8d8d8" stroke-width="0.9"/>
<rect x="969.5" y="5" width="5" height="4" stroke="#d8d8d8" stroke-width="0.8" fill="none"/><rect x="971.5" y="7" width="5" height="4" stroke="#d8d8d8" stroke-width="0.8" fill="#262c2d"/>
<path d="M986.5 5.5L991 10M991 5.5L986.5 10" stroke="#d8d8d8" stroke-width="0.9"/>
<path d="M10.7 20.5L5.8 25.3H7.5V30.8H9.6V27.5H11.8V30.8H13.9V25.3H15.7Z" fill="#ffffff"/>
<path d="M38.5 21.3L42.5 23.4V27.6L38.5 29.7L34.5 27.6V23.4Z M34.5 23.4L38.5 25.5L42.5 23.4M36.6 22.3L38.5 23.6L40.4 22.3M38.5 25.5V27.3" stroke="#d0d0d0" stroke-width="0.85" fill="none" stroke-linejoin="round"/>
<path d="M112.5 21L116.7 23.2L112.5 25.4L108.3 23.2Z M108.3 25.4L112.5 27.6L116.7 25.4M108.3 27.5L112.5 29.7L116.7 27.5" stroke="#a8f0c0" stroke-width="0.8" fill="none" stroke-linejoin="round"/>
<rect x="176.8" y="20.7" width="4" height="3.6" rx="0.6" stroke="#d8d8d8" stroke-width="0.8" fill="none"/><rect x="182.8" y="26.5" width="4" height="3.6" rx="0.6" stroke="#d8d8d8" stroke-width="0.8" fill="none"/><path d="M183.8 20.7H186.8V23.7M176.8 27.2V30.1H179.8" stroke="#d8d8d8" stroke-width="0.8" fill="none"/>
<rect x="249.2" y="20.8" width="9.4" height="9" rx="1.2" stroke="#d8d8d8" stroke-width="0.8" fill="none"/><path d="M252 23.4H256M252 25.3H256M252 27.2H256M251 23.4H251.5M251 25.3H251.5M251 27.2H251.5" stroke="#d8d8d8" stroke-width="0.7"/>
<rect x="316.3" y="20.7" width="4" height="3.6" rx="0.6" stroke="#d8d8d8" stroke-width="0.8" fill="none"/><rect x="322.3" y="26.5" width="4" height="3.6" rx="0.6" stroke="#d8d8d8" stroke-width="0.8" fill="none"/><path d="M323.3 20.7H326.3V23.7M316.3 27.2V30.1H319.3" stroke="#d8d8d8" stroke-width="0.8" fill="none"/>
<path d="M744 22V28M741.7 24.2L744 21.9L746.3 24.2M740.5 26.5V29H747.5V26.5" stroke="#fff" stroke-width="0.9" fill="none"/>
<path d="M806.4 24.3L808.8 26.6L811.1999999999999 24.3" stroke="#fff" stroke-width="0.9" fill="none"/>
<path d="M901.4 24.3L903.8 26.6L906.1999999999999 24.3" stroke="#fff" stroke-width="0.9" fill="none"/>
<rect x="5.3" y="38.8" width="8.7" height="6.8" rx="0.8" stroke="#888" stroke-width="0.9" fill="none"/><rect x="7.2" y="42.5" width="4.2" height="1.3" fill="#2db560"/>
<polygon points="210.80,42.50 208.65,46.22 204.35,46.22 202.20,42.50 204.35,38.78 208.65,38.78" stroke="#777" stroke-width="0.9" fill="none" stroke-linejoin="round"/><circle cx="206.5" cy="42.5" r="1.4" stroke="#777" stroke-width="0.8" fill="none"/>
<path d="M5.5 65.2L7.9 67.4L10.3 65.2" stroke="#9a9a9a" stroke-width="0.7" fill="none"/>
<path d="M206.3 62.1H203.0Q202.3 62.1 202.3 62.8V68.8Q202.3 69.5 203.0 69.5H209.0Q209.70000000000002 69.5 209.70000000000002 68.8V65.5" stroke="#9a9a9a" stroke-width="0.8" fill="none"/><path d="M205.3 66.5L209.60000000000002 62.2" stroke="#9a9a9a" stroke-width="0.8"/>
<path d="M68.3 82.3L70.7 84.5L73.1 82.3" stroke="#9a9a9a" stroke-width="0.7" fill="none"/>
<path d="M6 103.3L9.5 104.3L13.5 103.3V110.5L9.5 111.5L6 110.5Z M9.5 104.3V111.5" stroke="#3fb86b" stroke-width="0.9" fill="#dff3e6"/>
<path d="M149 107H155M152 104V110" stroke="#444" stroke-width="1.1"/>
<path d="M165 107H171" stroke="#444" stroke-width="1.1"/>
<rect x="185" y="103.2" width="8" height="7.6" rx="1" stroke="#666" stroke-width="0.9" fill="none"/><rect x="185.3" y="103.5" width="7.4" height="2" fill="#666"/><circle cx="192.3" cy="109.3" r="2.6" fill="#fff" stroke="#666" stroke-width="0.8"/><path d="M191.3 109.6L192 110.3L193.4 108.6" stroke="#666" stroke-width="0.6" fill="none"/>
<polygon points="211.10,107.00 208.95,110.72 204.65,110.72 202.50,107.00 204.65,103.28 208.95,103.28" stroke="#777" stroke-width="0.9" fill="none" stroke-linejoin="round"/><circle cx="206.8" cy="107" r="1.4" stroke="#777" stroke-width="0.8" fill="none"/>
<path d="M101.5 128.1H98.2Q97.5 128.1 97.5 128.8V134.8Q97.5 135.5 98.2 135.5H104.2Q104.9 135.5 104.9 134.8V131.5" stroke="#9a9a9a" stroke-width="0.8" fill="none"/><path d="M100.5 132.5L104.8 128.2" stroke="#9a9a9a" stroke-width="0.8"/>
<path d="M211.0 128.1H207.7Q207.0 128.1 207.0 128.8V134.8Q207.0 135.5 207.7 135.5H213.7Q214.4 135.5 214.4 134.8V131.5" stroke="#9a9a9a" stroke-width="0.8" fill="none"/><path d="M210.0 132.5L214.3 128.2" stroke="#9a9a9a" stroke-width="0.8"/>
<path d="M101.5 143.6H98.2Q97.5 143.6 97.5 144.3V150.3Q97.5 151.0 98.2 151.0H104.2Q104.9 151.0 104.9 150.3V147.0" stroke="#9a9a9a" stroke-width="0.8" fill="none"/><path d="M100.5 148.0L104.8 143.7" stroke="#9a9a9a" stroke-width="0.8"/>
<path d="M211.0 143.6H207.7Q207.0 143.6 207.0 144.3V150.3Q207.0 151.0 207.7 151.0H213.7Q214.4 151.0 214.4 150.3V147.0" stroke="#9a9a9a" stroke-width="0.8" fill="none"/><path d="M210.0 148.0L214.3 143.7" stroke="#9a9a9a" stroke-width="0.8"/>
<path d="M101.5 159.6H98.2Q97.5 159.6 97.5 160.3V166.3Q97.5 167.0 98.2 167.0H104.2Q104.9 167.0 104.9 166.3V163.0" stroke="#9a9a9a" stroke-width="0.8" fill="none"/><path d="M100.5 164.0L104.8 159.7" stroke="#9a9a9a" stroke-width="0.8"/>
<path d="M21.7 131.2L23.7 133.2L25.7 131.2" stroke="#9a9a9a" stroke-width="0.7" fill="none"/>
<path d="M131.1 131.2L133.1 133.2L135.1 131.2" stroke="#9a9a9a" stroke-width="0.7" fill="none"/>
<path d="M21.7 146.7L23.7 148.7L25.7 146.7" stroke="#9a9a9a" stroke-width="0.7" fill="none"/>
<path d="M131.1 146.7L133.1 148.7L135.1 146.7" stroke="#9a9a9a" stroke-width="0.7" fill="none"/>
<path d="M21.7 162.7L23.7 164.7L25.7 162.7" stroke="#9a9a9a" stroke-width="0.7" fill="none"/>
<path d="M5.5 185L9.7 183.5L13.7 185L9.7 186.5Z M5.5 187L9.7 188.5L13.7 187M5.5 189L9.7 190.5L13.7 189" stroke="#5a8a70" stroke-width="0.85" fill="none"/>
<rect x="196" y="183.5" width="8.7" height="8" rx="1" stroke="#666" stroke-width="0.9" fill="none"/><path d="M198.2 185.7H199M200.2 185.7H203M198.2 187.5H199M200.2 187.5H203M198.2 189.3H199M200.2 189.3H203" stroke="#666" stroke-width="0.7"/>
<path d="M207.5 184.5L210 187L213 184M209 187.5L207.5 190.5M211 188.5L213.5 191" stroke="#7cc89a" stroke-width="1" fill="none"/>
<path d="M9.2 206.8L11.6 209.0L14.0 206.8" stroke="#9a9a9a" stroke-width="0.7" fill="none"/>
<path d="M187.5 206.5A3.2 3.2 0 1 0 187.8 210" stroke="#e07a6a" stroke-width="0.9" fill="none"/><path d="M186.3 206.2L188.3 206.8L188 204.7" stroke="#e07a6a" stroke-width="0.8" fill="none"/>
<path d="M193 205H199.2L200.5 206.3V212H193Z" stroke="#555" stroke-width="0.9" fill="none"/><rect x="194.3" y="209" width="4.8" height="1.8" fill="#555"/>
<circle cx="208.6" cy="207.3" r="3" stroke="#555" stroke-width="0.9" fill="none"/><path d="M210.8 209.5L213.3 212" stroke="#555" stroke-width="1"/>
<path d="M3.2 245.5Q3.2 243 7 243Q10.8 243 10.8 245.5V250.5H3.2Z" fill="#555"/><path d="M3.2 247.3H10.8" stroke="#fff" stroke-width="0.7"/>
<rect x="3.3" y="293.3" width="7.4" height="7.4" stroke="#777" stroke-width="0.8" fill="#eee"/><path d="M5 299L9 295" stroke="#888" stroke-width="0.8"/>
<circle cx="6.5" cy="329.5" r="2.5" stroke="#666" stroke-width="0.8" fill="none"/><circle cx="9.5" cy="332.8" r="2.5" stroke="#666" stroke-width="0.8" fill="none"/><circle cx="6.5" cy="329.5" r="0.8" fill="#666"/>
<path d="M131.5 313.3L133.5 315.3L135.5 313.3" stroke="#9a9a9a" stroke-width="0.7" fill="none"/>
<path d="M131.5 352.5L133.5 354.5L135.5 352.5" stroke="#9a9a9a" stroke-width="0.7" fill="none"/>
<path d="M756 44.5L759.5 42L763 44.5M756 46.5L759.5 44L763 46.5" stroke="#bbb" stroke-width="0.8" fill="none"/>
<path d="M830.5 44.2L832.5 46.2L834.5 44.2" stroke="#ddd" stroke-width="0.8" fill="none"/>
<path d="M982.5 538L988 541L982.5 544L977 541Z" fill="#1aa64f"/><path d="M977 543.3L982.5 546.3L988 543.3M977 545.8L982.5 548.8L988 545.8" stroke="#1aa64f" stroke-width="1.2" fill="none"/>
<rect x="219.5" y="35" width="66" height="69.7" fill="#dedede"/>
<rect x="223.3" y="39.3" width="56.8" height="56.5" rx="2" fill="#d5d5d5" stroke="#5fa0e0" stroke-width="1.2"/>
<path d="M232.9 58.1L237.3 60.9L237.3 78.3L232.9 75.3Z" fill="#b2b2b2"/>
<path d="M237.3 60.9L241.8 58.1L241.8 75.3L237.3 78.3Z" fill="#9c9c9c"/>
<path d="M241.8 58.1L246.2 60.9L246.2 78.3L241.8 75.3Z" fill="#b2b2b2"/>
<path d="M246.2 60.9L250.6 58.1L250.6 75.3L246.2 78.3Z" fill="#9c9c9c"/>
<path d="M250.8 58.1L255.2 60.9L255.2 78.3L250.8 75.3Z" fill="#b2b2b2"/>
<path d="M255.2 60.9L259.6 58.1L259.6 75.3L255.2 78.3Z" fill="#9c9c9c"/>
<path d="M259.7 58.1L264.1 60.9L264.1 78.3L259.7 75.3Z" fill="#b2b2b2"/>
<path d="M264.1 60.9L268.6 58.1L268.6 75.3L264.1 78.3Z" fill="#9c9c9c"/>
<path d="M250.5 45.3L268.6 58.1L264.1 60.9L259.6 58.1L255.2 60.9L250.7 58.1L246.2 60.9L241.8 58.1L237.3 60.9L232.9 58.1Z" fill="#d0d0d0"/>
<path d="M246.9 48.7L250.5 46.5L254.1 48.7L250.5 50.9ZM242.6 51.9L246.2 49.7L249.8 51.9L246.2 54.1ZM251.6 51.9L255.2 49.7L258.8 51.9L255.2 54.1ZM237.9 55.1L241.5 52.9L245.1 55.1L241.5 57.3ZM247.1 55.1L250.7 52.9L254.3 55.1L250.7 57.3ZM256.3 55.1L259.9 52.9L263.5 55.1L259.9 57.3ZM233.7 58.1L237.3 55.9L240.9 58.1L237.3 60.3ZM242.6 58.1L246.2 55.9L249.8 58.1L246.2 60.3ZM251.6 58.1L255.2 55.9L258.8 58.1L255.2 60.3ZM260.5 58.1L264.1 55.9L267.7 58.1L264.1 60.3Z" fill="#929292"/></svg>
</body></html>
